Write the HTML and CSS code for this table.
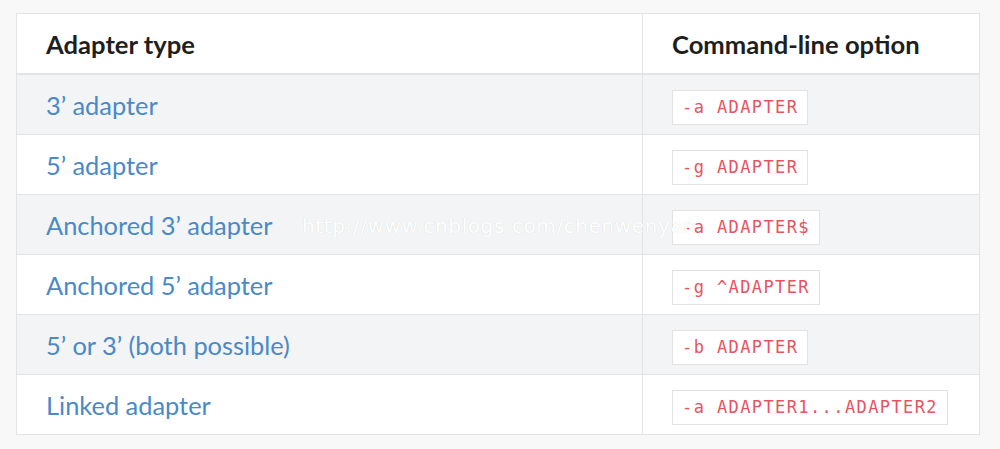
FILE: index.html
```html
<!DOCTYPE html>
<html lang="en">
<head>
  <meta charset="UTF-8" />
  <title>Adapter types</title>
  <link rel="stylesheet" href="styles.css">
</head>
<body>
  <div class="page">
    <table class="adapters">
      <thead>
        <tr>
          <th class="col-type">Adapter type</th>
          <th>Command-line option</th>
        </tr>
      </thead>
      <tbody>
        <tr>
          <td><a href="#">3’ adapter</a></td>
          <td><code>-a ADAPTER</code></td>
        </tr>
        <tr>
          <td><a href="#">5’ adapter</a></td>
          <td><code>-g ADAPTER</code></td>
        </tr>
        <tr>
          <td><a href="#">Anchored 3’ adapter</a></td>
          <td><code>-a ADAPTER$</code></td>
        </tr>
        <tr>
          <td><a href="#">Anchored 5’ adapter</a></td>
          <td><code>-g ^ADAPTER</code></td>
        </tr>
        <tr>
          <td><a href="#">5’ or 3’ (both possible)</a></td>
          <td><code>-b ADAPTER</code></td>
        </tr>
        <tr>
          <td><a href="#">Linked adapter</a></td>
          <td><code>-a ADAPTER1...ADAPTER2</code></td>
        </tr>
      </tbody>
    </table>
    <!-- blog watermark over the table -->
    <div class="watermark">http://www.cnblogs.com/chenwenyan</div>
  </div>
</body>
</html>
```

FILE: styles.css
```css
body {
  margin: 0;
  background: #f8f8f8;
  font-family: 'Lato', 'Liberation Sans', sans-serif;
}
.page {
  position: relative;
  padding: 13px 20px 0 16px;
}
/* Table */
.adapters {
  width: 100%;
  border-collapse: collapse;
  border: 1px solid #e3e4e5;
  background: #fff;
}
.adapters th,
.adapters td {
  height: 59px;
  padding: 0 0 0 29px;
  text-align: left;
  border-right: 1px solid #e3e4e5;
  border-bottom: 1px solid #e3e4e5;
}
.adapters th.col-type,
.adapters td:first-child {
  width: 596px;
  padding-left: 29px;
}
.adapters th {
  font-size: 25.6px;
  font-weight: 700;
  color: #1e1e1e;
  border-bottom: 2px solid #e3e4e5;
}
.adapters tbody tr:nth-child(odd) {
  background: #f3f4f5;
}
.adapters a {
  color: #4a89c8;
  text-decoration: none;
  font-size: 25.4px;
}
.adapters code {
  display: inline-block;
  margin-top: 5px;
  padding: 6px 9px 7px;
  background: #fff;
  border: 1px solid #e3e3e3;
  color: #ea5262;
  font-family: 'DejaVu Sans Mono', monospace;
  font-size: 17px;
  letter-spacing: 1.4px;
}
.watermark {
  position: absolute;
  left: 302px;
  top: 214px;
  color: #fff;
  font-family: 'DejaVu Sans', sans-serif;
  font-size: 20px;
  letter-spacing: 0.6px;
  text-shadow: 0 0 1px rgba(0,0,0,0.15);
}
```
